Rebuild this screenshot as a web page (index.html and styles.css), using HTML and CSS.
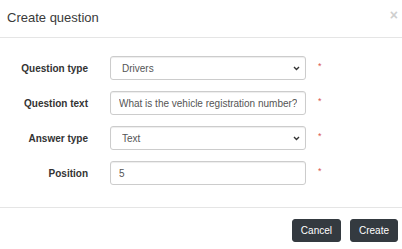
FILE: index.html
```html
<!DOCTYPE html>
<html lang="en">
<head>
  <meta charset="UTF-8">
  <meta name="viewport" content="width=device-width, initial-scale=1.0">
  <title>Create question</title>
  <link rel="stylesheet" href="styles.css">
</head>
<body>

  <div class="modal">
    <div class="modal-header">
      <h4 class="modal-title">Create question</h4>
      <span class="close">&times;</span>
    </div>

    <form class="modal-body">
      <div class="form-row">
        <label class="form-label" for="type">Question type</label>
        <div class="select-wrap">
          <select id="type" class="form-control">
            <option>Drivers</option>
          </select>
          <svg class="caret" width="7" height="5" viewBox="0 0 7 5"><path d="M1 1l2.5 2.5L6 1" fill="none" stroke="#333" stroke-width="1.4"/></svg>
        </div>
        <span class="required">*</span>
      </div>

      <div class="form-row">
        <label class="form-label" for="text">Question text</label>
        <input id="text" class="form-control" type="text" value="What is the vehicle registration number?">
        <span class="required">*</span>
      </div>

      <div class="form-row">
        <label class="form-label" for="answer">Answer type</label>
        <div class="select-wrap">
          <select id="answer" class="form-control">
            <option>Text</option>
          </select>
          <svg class="caret" width="7" height="5" viewBox="0 0 7 5"><path d="M1 1l2.5 2.5L6 1" fill="none" stroke="#333" stroke-width="1.4"/></svg>
        </div>
        <span class="required">*</span>
      </div>

      <div class="form-row">
        <label class="form-label" for="position">Position</label>
        <input id="position" class="form-control" type="text" value="5">
        <span class="required">*</span>
      </div>
    </form>

    <div class="modal-footer">
      <button class="btn">Cancel</button>
      <button class="btn">Create</button>
    </div>
  </div>

</body>
</html>
```

FILE: styles.css
```css
* {
  margin: 0;
  padding: 0;

  box-sizing: border-box;
  font-family: 'Liberation Sans', Arial, sans-serif;
}

body {
  background: #fff;
  color: #333;
}

.modal {
  width: 402px;
  height: 249px;
}

.modal-header {
  display: flex;
  align-items: center;
  justify-content: space-between;

  height: 38px;
  padding: 0 4px 2px 7px;

  border-bottom: 1px solid #e5e5e5;
}

.modal-title {
  font-size: 13px;
  font-weight: 400;
  color: #3a3a3a;
}

.close {
  font-size: 14px;
  font-weight: 700;
  line-height: 1;
  color: #cfcfcf;
  margin-top: -6px;
}

.modal-body {
  display: flex;
  flex-direction: column;
  gap: 11px;

  padding: 18px 0 22px;
  border-bottom: 1px solid #e5e5e5;
}

.form-row {
  display: flex;
  align-items: center;
}

.form-label {
  width: 88px;
  margin-right: 22px;

  font-size: 10px;
  font-weight: 700;
  text-align: right;
  color: #333;
}

.form-control {
  width: 196px;
  height: 24px;
  padding: 0 8px;

  font-size: 10px;
  color: #555;

  background: #fff;
  border: 1px solid #ccc;
  border-radius: 3px;
  box-shadow: inset 0 1px 1px rgba(0, 0, 0, .075);
  outline: none;
}

select.form-control {
  padding-left: 11px;
  -webkit-appearance: none;
  appearance: none;
}

.select-wrap {
  position: relative;
}

.caret {
  position: absolute;
  top: 10px;
  right: 6px;
}

.required {
  margin-left: 12px;
  margin-top: -4px;

  font-size: 9px;
  color: #d9534f;
}

.modal-footer {
  display: flex;
  justify-content: flex-end;
  gap: 9px;

  padding: 11px 4px 0 0;
}

.btn {
  height: 23px;
  padding: 0 8px;

  font-size: 10px;
  color: #fff;

  background: #343a40;
  border: 1px solid #343a40;
  border-radius: 3px;
}
```
